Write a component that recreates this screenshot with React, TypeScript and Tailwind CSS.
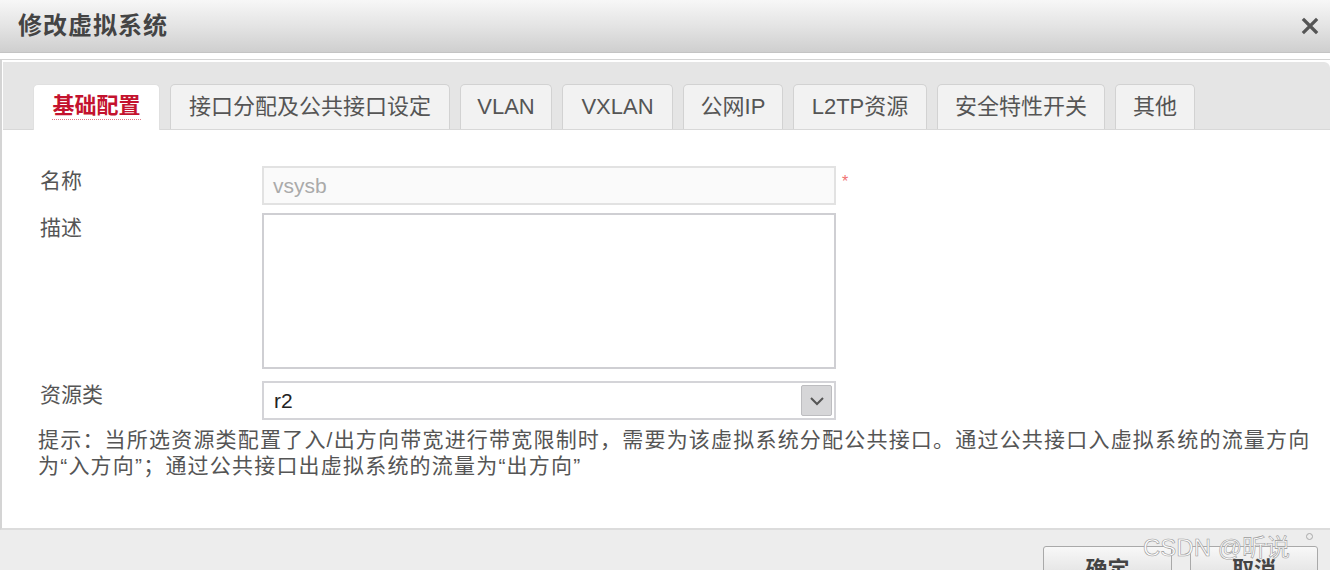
import React from "react";

const F = { fontFamily: '"Liberation Sans", "Noto Sans CJK SC", sans-serif' };

const tabs: { label: string; w: string; active?: boolean }[] = [
  { label: "基础配置", w: "w-[127px]", active: true },
  { label: "接口分配及公共接口设定", w: "w-[280px]" },
  { label: "VLAN", w: "w-[92px]" },
  { label: "VXLAN", w: "w-[111px]" },
  { label: "公网IP", w: "w-[100px]" },
  { label: "L2TP资源", w: "w-[134px]" },
  { label: "安全特性开关", w: "w-[168px]" },
  { label: "其他", w: "w-[80px]" },
];

export default function App() {
  return (
    <div style={F} className="relative w-[1330px] h-[570px] overflow-hidden bg-white text-[#555]">
      {/* title bar */}
      <div className="h-[53px] flex items-center justify-between pl-[18px] pr-[8px] bg-gradient-to-b from-[#f7f7f7] via-[#e4e4e4] to-[#cfcfcf] border-b border-[#c4c4c4]">
        <span className="text-[24px] font-bold text-[#444] tracking-[1px]">修改虚拟系统</span>
        <svg width="20" height="20" viewBox="0 0 20 20" className="mr-[2px]">
          <path d="M4 4 L16 16 M16 4 L4 16" stroke="#555" strokeWidth="3.2" strokeLinecap="square" />
        </svg>
      </div>
      <div className="h-[6px] bg-white" />
      {/* panel */}
      <div className="border-l-[2px] border-t border-[#d4d4d4] border-b-[2px] border-b-[#dcdcdc]">
        <div className="h-[68px] bg-[#e5e5e5] rounded-tr-[6px] mt-[2px] ml-[1px] flex items-end gap-[10px] pl-[30px] border-b border-[#d8d8d8]">
          {tabs.map((t) => (
            <div
              key={t.label}
              className={
                t.active
                  ? `${t.w} h-[46px] -mb-px bg-white rounded-t-[5px] border border-b-0 border-[#e0e0e0] flex items-center justify-center pb-[2px]`
                  : `${t.w} h-[45px] bg-[#f2f2f2] rounded-t-[5px] border border-b-0 border-[#d2d2d2] flex items-center justify-center pb-[2px]`
              }
            >
              {t.active ? (
                <span className="text-[22px] font-bold text-[#c4122e] border-b border-dotted border-[#e07a88] leading-[26px]">
                  {t.label}
                </span>
              ) : (
                <span className="text-[22px] text-[#555]">{t.label}</span>
              )}
            </div>
          ))}
        </div>
        <div className="h-[398px] bg-white pl-[38px] pt-[36px]">
          <div className="flex">
            <div className="w-[222px] text-[21px] leading-[28px] pt-[1px]">名称</div>
            <div className="w-[574px] h-[39px] bg-[#fafafa] border-[2px] border-[#e2e2e2] flex items-center px-[9px] text-[21px] text-[#aaa]">
              vsysb
            </div>
            <span className="ml-[6px] mt-[6px] text-[#f07070] text-[16px] leading-[20px]">*</span>
          </div>
          <div className="flex mt-[8px]">
            <div className="w-[222px] text-[21px] leading-[28px] pt-[1px]">描述</div>
            <div className="w-[574px] h-[156px] bg-white border-[2px] border-[#cfcfd3]" />
          </div>
          <div className="flex mt-[12px]">
            <div className="w-[222px] text-[21px] leading-[28px]">资源类</div>
            <div className="w-[574px] h-[39px] bg-white border-[2px] border-[#d4d4d8] flex items-center justify-between pl-[10px] pr-[2px]">
              <span className="text-[21px] text-[#222]">r2</span>
              <div className="w-[31px] h-[31px] bg-[#d6d6d8] border border-[#bdbdc0] rounded-[2px] flex items-center justify-center">
                <svg width="16" height="10" viewBox="0 0 16 10">
                  <path d="M2 2 L8 8 L14 2" fill="none" stroke="#555" strokeWidth="2" />
                </svg>
              </div>
            </div>
          </div>
          <div className="mt-[7px] -ml-[2px] text-[21px] leading-[26px] text-[#555] tracking-[1.2px]">
            <div>提示：当所选资源类配置了入/出方向带宽进行带宽限制时，需要为该虚拟系统分配公共接口。通过公共接口入虚拟系统的流量方向</div>
            <div>为“入方向”；通过公共接口出虚拟系统的流量为“出方向”</div>
          </div>
        </div>
      </div>
      {/* footer */}
      <div className="h-[45px] bg-[#ededed] flex justify-end gap-[18px] pr-[12px] pt-[16px]">
        <div className="w-[129px] h-[40px] rounded-[3px] border border-[#a9a9a9] bg-gradient-to-b from-[#f8f8f8] to-[#dcdcdc] flex justify-center pt-[6px] text-[22px] font-bold text-[#444]">
          确定
        </div>
        <div className="w-[128px] h-[40px] rounded-[3px] border border-[#a9a9a9] bg-gradient-to-b from-[#f8f8f8] to-[#dcdcdc] flex justify-center pt-[6px] text-[22px] font-bold text-[#444]">
          取消
        </div>
      </div>
      {/* watermark */}
      <div
        className="absolute left-[1143px] top-[528px] text-[24px] text-white leading-[40px]"
        style={{ WebkitTextStroke: "0.6px #9a9a9a" }}
      >
        CSDN @昕说
      </div>
      <div className="absolute left-[1306px] top-[533px] w-[7px] h-[7px] rounded-full border border-[#aaa]" />
    </div>
  );
}
